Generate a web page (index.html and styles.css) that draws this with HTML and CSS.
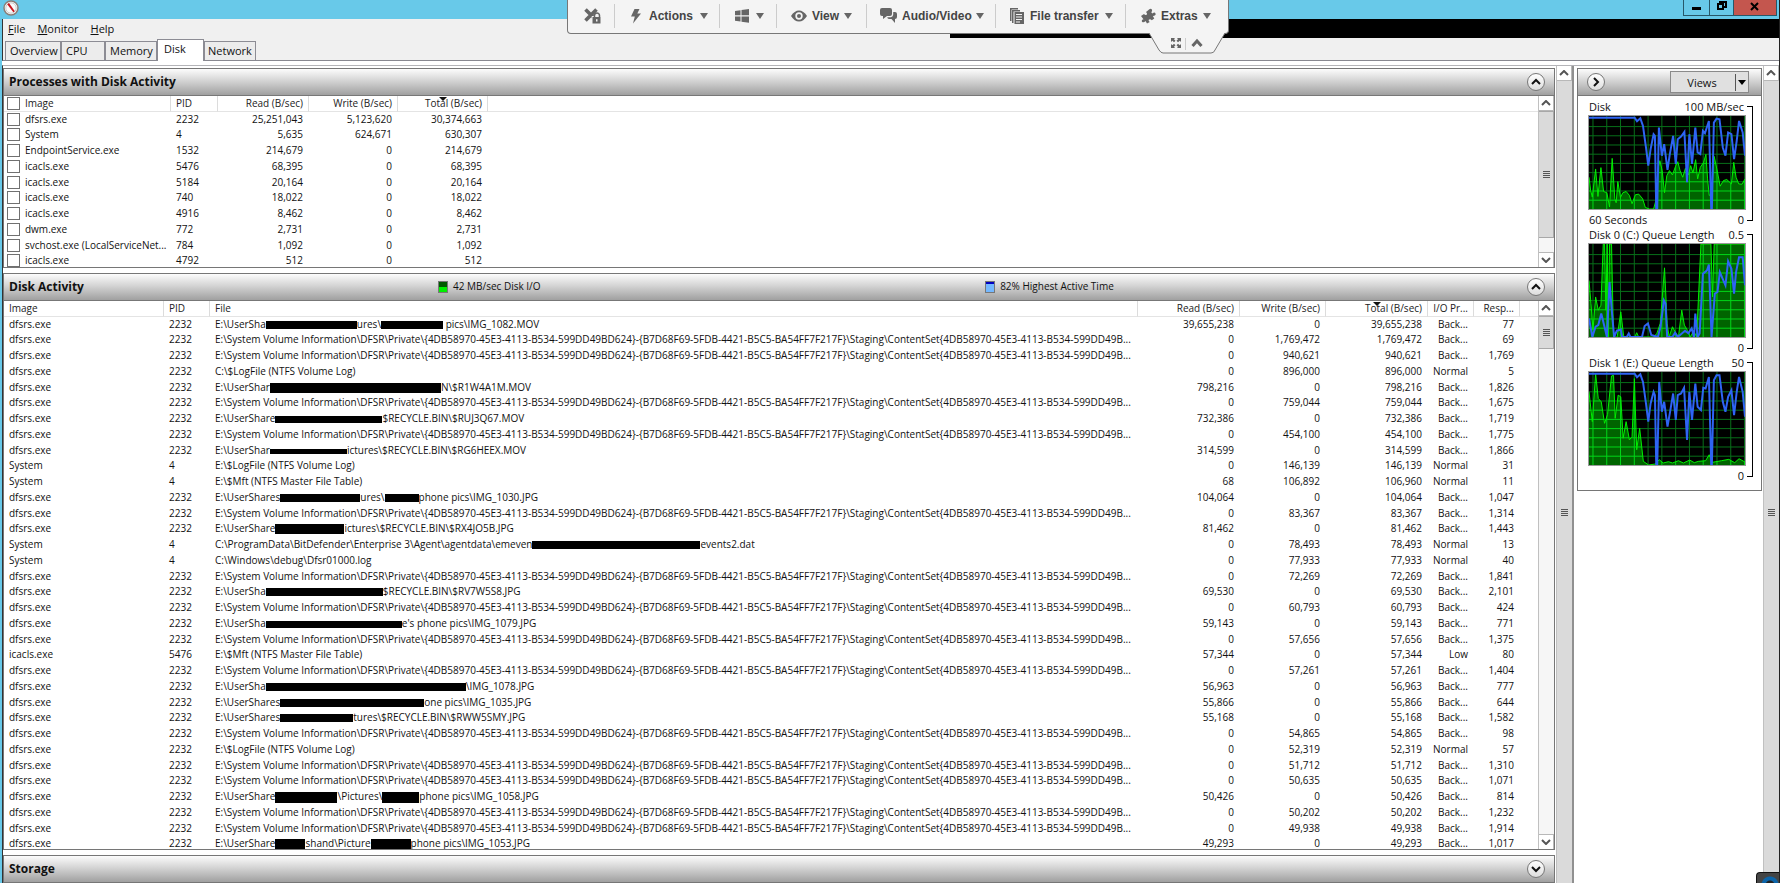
FILE: index.html
```html
<!DOCTYPE html>
<html lang="en">
<head>
    <meta charset="UTF-8">
    <meta name="viewport" content="width=device-width, initial-scale=1.0">
    <title>Resource Monitor</title>
    <link rel="stylesheet" href="styles.css">
</head>
<body>
    <div class="titlebar">
        <svg class="app-icon" viewBox="0 0 16 16" width="16" height="16">
            <circle cx="8" cy="8" r="7" fill="#fafafa" stroke="#8a7f78" stroke-width="1.5"/>
            <circle cx="8" cy="8" r="5.2" fill="none" stroke="#ccc"/>
            <path d="M4.2 4.2L6 3l5.800 8.200-1.400 1z" fill="#c8141c"/>
        </svg>
        <div class="controls">
            <button class="min" aria-label="Minimize"><svg width="10" height="12" viewBox="0 0 10 12"><path d="M0 7h9v3H0z"/></svg></button>
            <button class="restore" aria-label="Restore"><svg width="10" height="12" viewBox="0 0 10 12"><path d="M1 4h5v5H1zM3 4V2h6v5H6" fill="none" stroke="#000" stroke-width="2"/></svg></button>
            <button class="close" aria-label="Close"><svg width="10" height="12" viewBox="0 0 10 12"><path d="M1 3l7 7M8 3l-7 7" fill="none" stroke="#000" stroke-width="2"/></svg></button>
        </div>
    </div>
    <div class="menubar">
        <a href="#"><u>F</u>ile</a>
        <a href="#"><u>M</u>onitor</a>
        <a href="#"><u>H</u>elp</a>
        <div class="blackout"></div>
    </div>
    <div class="tabs">
        <button class="t1">Overview</button>
        <button class="t2">CPU</button>
        <button class="t3">Memory</button>
        <button class="t4 active">Disk</button>
        <button class="t5">Network</button>
    </div>

    <div class="main">
        <div class="left">
            <div class="panel processes">
                <div class="panel-head">
                    <h2>Processes with Disk Activity</h2>
                    <button class="round" aria-label="Collapse"><svg width="12" height="10" viewBox="0 0 12 10"><path d="M2 7l4-4 4 4"/></svg></button>
                </div>
                <div class="panel-body">
                    <div class="table-wrap">
                        <table id="procs">
                            <colgroup><col class="p-image"><col class="p-pid"><col class="p-read"><col class="p-write"><col class="p-total"><col></colgroup>
                            <thead><tr>
                                <th><label><input type="checkbox">Image</label></th><th>PID</th><th class="num">Read (B/sec)</th><th class="num">Write (B/sec)</th><th class="num sorted">Total (B/sec)</th><th></th>
                            </tr></thead>
                            <tbody></tbody>
                        </table>
                    </div>
                    <div class="scroll">
                        <button aria-label="Up"><svg width="10" height="6" viewBox="0 0 10 6"><path d="M1 5l4-4 4 4"/></svg></button>
                        <div class="thumb thumb-procs"><i></i></div>
                        <div class="track"></div>
                        <button aria-label="Down"><svg width="10" height="6" viewBox="0 0 10 6"><path d="M1 1l4 4 4-4"/></svg></button>
                    </div>
                </div>
            </div>

            <div class="panel activity">
                <div class="panel-head">
                    <h2>Disk Activity</h2>
                    <span class="legend legend-io"><b class="swatch green"></b>42 MB/sec Disk I/O</span>
                    <span class="legend legend-time"><b class="swatch blue"></b>82% Highest Active Time</span>
                    <button class="round" aria-label="Collapse"><svg width="12" height="10" viewBox="0 0 12 10"><path d="M2 7l4-4 4 4"/></svg></button>
                </div>
                <div class="panel-body">
                    <div class="table-wrap">
                        <table id="files">
                            <colgroup><col class="f-image"><col class="f-pid"><col><col class="f-read"><col class="f-write"><col class="f-total"><col class="f-prio"><col class="f-resp"><col class="f-rest"></colgroup>
                            <thead><tr>
                                <th>Image</th><th>PID</th><th>File</th><th class="num">Read (B/sec)</th><th class="num">Write (B/sec)</th><th class="num sorted">Total (B/sec)</th><th class="num">I/O Pr...</th><th class="num">Resp...</th><th></th>
                            </tr></thead>
                            <tbody></tbody>
                        </table>
                    </div>
                    <div class="scroll">
                        <button aria-label="Up"><svg width="10" height="6" viewBox="0 0 10 6"><path d="M1 5l4-4 4 4"/></svg></button>
                        <div class="thumb thumb-files"><i></i></div>
                        <div class="track"></div>
                        <button aria-label="Down"><svg width="10" height="6" viewBox="0 0 10 6"><path d="M1 1l4 4 4-4"/></svg></button>
                    </div>
                </div>
            </div>

            <div class="panel storage">
                <div class="panel-head">
                    <h2>Storage</h2>
                    <button class="round" aria-label="Expand"><svg width="12" height="10" viewBox="0 0 12 10"><path d="M2 3l4 4 4-4"/></svg></button>
                </div>
            </div>
        </div>
        <div class="scroll outer">
            <button aria-label="Up"><svg width="10" height="6" viewBox="0 0 10 6"><path d="M1 5l4-4 4 4"/></svg></button>
            <div class="thumb"><i></i></div>
        </div>

        <div class="side">
            <div class="panel charts">
                <div class="panel-head">
                    <button class="round" aria-label="Hide graphs"><svg width="12" height="10" viewBox="0 0 12 10"><path d="M4 1l4 4-4 4"/></svg></button>
                    <button class="views"><span>Views</span><em></em></button>
                </div>
                <div id="charts"></div>
            </div>
        </div>
        <div class="scroll outer">
            <button aria-label="Up"><svg width="10" height="6" viewBox="0 0 10 6"><path d="M1 5l4-4 4 4"/></svg></button>
            <div class="thumb"><i></i></div>
        </div>
    </div>

    <!-- remote session toolbar, floats over the window -->
    <div class="remote">
        <div class="remote-bar">
            <button class="r-lock" aria-label="Close and lock"><svg width="18" height="18" viewBox="0 0 18 18"><path d="M1.500 2.500l11 11M12.500 2.500l-11 11" fill="none" stroke="#666" stroke-width="3.6"/><path d="M8 9.500h9V17H8z" fill="#666" stroke="#f4f4f4" stroke-width="1"/><path d="M10.500 10V8.500a2.500 2.500 0 0 1 5 0V10" fill="none" stroke="#666" stroke-width="1.500"/><path d="M12 12.200h1.500v2.300H12z" fill="#f4f4f4"/></svg></button>
            <button class="r-actions"><svg width="12" height="16" viewBox="0 0 12 16"><path d="M4.500 1h5L7.300 5.500H11L3 15.500l1.800-7H1z"/></svg>Actions<em></em></button>
            <button class="r-win" aria-label="Windows"><svg width="16" height="16" viewBox="0 0 16 16"><path d="M1 3l5.500-.8v5H1zM7.500 2L15 1v6.200H7.500zM1 8.500h5.500v5L1 12.800zM7.500 8.500H15v6.200l-7.500-1z"/></svg><em></em></button>
            <button class="r-view"><svg width="16" height="16" viewBox="0 0 16 16"><path fill-rule="evenodd" d="M0 8q3.500-5.500 8-5.500T16 8q-3.500 5.500-8 5.500T0 8zm8-3.700a3.700 3.700 0 1 0 0 7.400 3.700 3.700 0 0 0 0-7.400z"/><circle cx="8" cy="8" r="2"/></svg>View<em></em></button>
            <button class="r-av"><svg width="18" height="16" viewBox="0 0 18 16"><path d="M2 0h8q2 0 2 2v4q0 2-2 2H7l-4 3V8H2Q0 8 0 6V2q0-2 2-2z"/><path d="M13.200 4H15q2 0 2 2v3q0 2-2 2v4l-3.500-4H9q-1.500 0-1.800-1.800H11q2.200-.3 2.200-2.600z"/></svg>Audio/Video<em></em></button>
            <button class="r-file"><svg width="14" height="16" viewBox="0 0 14 16"><path d="M0 0h8v1.500H1.500V13H0zM2 2h8v1.500H3.500V15H2zM4.500 4H14v12H4.500z"/><path d="M6 6.500h6M6 9h6M6 11.500h6M6 14h4" stroke="#f4f4f4" fill="none"/></svg>File transfer<em></em></button>
            <button class="r-extras"><svg width="16" height="16" viewBox="0 0 16 16"><path d="M9 1.500q2-1.500 3 .3.300 1.500-.8 2.500l1.300 1.200q2-2 3 0 .7 1.800-1.200 2.200l-1.500.3 1.500 2.500-2.500 1.800Q10 10.500 8.800 11.800q-.5 1.200 1 2.200L7 15.500 5.500 13q-1.800 2-3.500.7-.8-2 1.500-2.500L1 8l3-2q1.500 1.800 2.800.5Q7.500 5.500 6 4l2.500-2z"/></svg>Extras<em></em></button>
        </div>
        <div class="remote-tab">
            <svg class="tab-shape" width="76" height="21" viewBox="0 0 76 21"><path d="M0 0L10 17q2 3 4 3h48q3 0 4-3L76 0" fill="#f4f4f4" stroke="#777"/></svg>
            <button aria-label="Full screen"><svg width="10" height="10" viewBox="0 0 10 10"><path d="M0 0h4L3 1.200l1.500 1.500-1.500 1.500L1.400 2.800 0 4zM10 0v4L8.800 2.800 7 4.200 5.500 2.700 7 1.200 6 0zM0 10V6l1.400 1.200L3 5.700l1.500 1.500L3 8.800 4 10zM10 10H6l1-1.200-1.500-1.600L7 5.700l1.800 1.500L10 6z"/></svg></button>
            <button class="up" aria-label="Hide toolbar"><svg width="12" height="10" viewBox="0 0 12 10"><path d="M1.500 8L6 3l4.500 5" fill="none" stroke="#666" stroke-width="3"/></svg></button>
        </div>
    </div>
    <div class="badge"></div>

    <script>
        //processes table: image, pid, read, write, total
        var procs = [
            ["dfsrs.exe", "2232", "25,251,043", "5,123,620", "30,374,663"],
            ["System", "4", "5,635", "624,671", "630,307"],
            ["EndpointService.exe", "1532", "214,679", "0", "214,679"],
            ["icacls.exe", "5476", "68,395", "0", "68,395"],
            ["icacls.exe", "5184", "20,164", "0", "20,164"],
            ["icacls.exe", "740", "18,022", "0", "18,022"],
            ["icacls.exe", "4916", "8,462", "0", "8,462"],
            ["dwm.exe", "772", "2,731", "0", "2,731"],
            ["svchost.exe (LocalServiceNet...", "784", "1,092", "0", "1,092"],
            ["icacls.exe", "4792", "512", "0", "512"]
        ]
        var html = ""
        procs.forEach(function(p){
            html += "<tr><td><label><input type='checkbox'>" + p[0] + "</label></td><td>" + p[1] + "</td>"
            html += "<td class='num'>" + p[2] + "</td><td class='num'>" + p[3] + "</td><td class='num'>" + p[4] + "</td><td></td></tr>"
        })
        document.querySelector("#procs tbody").innerHTML = html

        //files table: file, read, write, total, response time
        //[n] in a path is a blacked out part n pixels wide, [n,h] sets its height too
        var staging = "E:\\System Volume Information\\DFSR\\Private\\{4DB58970-45E3-4113-B534-599DD49BD624}-{B7D68F69-5FDB-4421-B5C5-BA54FF7F217F}\\Staging\\ContentSet{4DB58970-45E3-4113-B534-599DD49B..."
        var files = [
            ["E:\\UserSha[91]ures\\[62] pics\\IMG_1082.MOV", "39,655,238", "0", "39,655,238", "77"],
            [staging, "0", "1,769,472", "1,769,472", "69"],
            [staging, "0", "940,621", "940,621", "1,769"],
            ["C:\\$LogFile (NTFS Volume Log)", "0", "896,000", "896,000", "5"],
            ["E:\\UserShar[171,10]N\\$R1W4A1M.MOV", "798,216", "0", "798,216", "1,826"],
            [staging, "0", "759,044", "759,044", "1,675"],
            ["E:\\UserShare[107,7]$RECYCLE.BIN\\$RUJ3Q67.MOV", "732,386", "0", "732,386", "1,719"],
            [staging, "0", "454,100", "454,100", "1,775"],
            ["E:\\UserShar[77,5]ictures\\$RECYCLE.BIN\\$RG6HEEX.MOV", "314,599", "0", "314,599", "1,866"],
            ["E:\\$LogFile (NTFS Volume Log)", "0", "146,139", "146,139", "31"],
            ["E:\\$Mft (NTFS Master File Table)", "68", "106,892", "106,960", "11"],
            ["E:\\UserShares[80]ures\\[34]phone pics\\IMG_1030.JPG", "104,064", "0", "104,064", "1,047"],
            [staging, "0", "83,367", "83,367", "1,314"],
            ["E:\\UserShare[69,10]ictures\\$RECYCLE.BIN\\$RX4JO5B.JPG", "81,462", "0", "81,462", "1,443"],
            ["C:\\ProgramData\\BitDefender\\Enterprise 3\\Agent\\agentdata\\emeven[168]events2.dat", "0", "78,493", "78,493", "13"],
            ["C:\\Windows\\debug\\Dfsr01000.log", "0", "77,933", "77,933", "40"],
            [staging, "0", "72,269", "72,269", "1,841"],
            ["E:\\UserSha[117]$RECYCLE.BIN\\$RV7W5S8.JPG", "69,530", "0", "69,530", "2,101"],
            [staging, "0", "60,793", "60,793", "424"],
            ["E:\\UserSha[136,7]e's phone pics\\IMG_1079.JPG", "59,143", "0", "59,143", "771"],
            [staging, "0", "57,656", "57,656", "1,375"],
            ["E:\\$Mft (NTFS Master File Table)", "57,344", "0", "57,344", "80"],
            [staging, "0", "57,261", "57,261", "1,404"],
            ["E:\\UserSha[200]\\IMG_1078.JPG", "56,963", "0", "56,963", "777"],
            ["E:\\UserShares[144]one pics\\IMG_1035.JPG", "55,866", "0", "55,866", "644"],
            ["E:\\UserShares[73]tures\\$RECYCLE.BIN\\$RWW5SMY.JPG", "55,168", "0", "55,168", "1,582"],
            [staging, "0", "54,865", "54,865", "98"],
            ["E:\\$LogFile (NTFS Volume Log)", "0", "52,319", "52,319", "57"],
            [staging, "0", "51,712", "51,712", "1,310"],
            [staging, "0", "50,635", "50,635", "1,071"],
            ["E:\\UserShare[62,11]\\Pictures\\[37,11]phone pics\\IMG_1058.JPG", "50,426", "0", "50,426", "814"],
            [staging, "0", "50,202", "50,202", "1,232"],
            [staging, "0", "49,938", "49,938", "1,914"],
            ["E:\\UserShare[30,11]shand\\Picture[40,11]phone pics\\IMG_1053.JPG", "49,293", "0", "49,293", "1,017"]
        ]
        html = ""
        files.forEach(function(f, i){
            var image = "dfsrs.exe", pid = "2232", prio = "Back..."
            if (/LogFile|Mft|Program|Windows/.test(f[0])) {
                prio = "Normal"
                if (i == 9 || i == 10 || i == 14 || i == 15) {
                    image = "System"
                    pid = "4"
                }
            }
            if (i == 21) {
                image = "icacls.exe"
                pid = "5476"
                prio = "Low"
            }
            var path = f[0].replace(/\[(\d+)(?:,(\d+))?\]/g, function(m, w, h){
                return "<span class='bar' style='width:" + w + "px;height:" + (h || 8) + "px'></span>"
            })
            html += "<tr><td>" + image + "</td><td>" + pid + "</td><td>" + path + "</td>"
            html += "<td class='num'>" + f[1] + "</td><td class='num'>" + f[2] + "</td><td class='num'>" + f[3] + "</td>"
            html += "<td class='num'>" + prio + "</td><td class='num'>" + f[4] + "</td><td></td></tr>"
        })
        document.querySelector("#files tbody").innerHTML = html

        //graphs, points are in a 471 x 281 box
        var charts = [
            {
                name: "Disk", max: "100 MB/sec", foot: "60 Seconds",
                green: "0,185 5,225 10,245 20,160 27,243 36,156 44,228 54,232 62,275 70,128 78,250 82,262 87,198 95,246 102,232 112,228 122,240 130,265 140,238 150,236 162,250 170,276 182,281 195,281 202,255 208,160 214,135 221,165 228,232 235,180 243,165 252,178 262,150 268,138 275,165 283,185 291,158 300,178 307,150 314,172 322,132 328,190 336,155 346,140 353,116 358,190 363,240 370,235 378,122 386,160 396,212 406,195 416,192 430,205 437,140 444,185 452,205 462,206 471,190",
                blue: "0,5 138,5 145,16 155,7 163,30 172,95 179,150 186,100 195,55 199,60 203,281 206,281 211,35 220,120 227,85 237,163 244,115 254,60 262,145 268,70 278,62 288,48 296,200 303,55 311,145 321,35 328,110 336,115 344,45 350,52 362,15 369,281 371,281 377,20 385,8 394,10 404,95 412,120 420,50 430,55 438,130 446,75 453,15 464,50 471,120"
            },
            {
                name: "Disk 0 (C:) Queue Length", max: "0.5", foot: "",
                green: "0,110 6,180 12,260 20,160 28,200 36,185 43,0 47,0 51,200 55,0 58,281 62,0 68,0 74,281 85,281 96,205 105,281 138,281 144,268 150,281 195,281 205,270 215,240 228,72 236,240 242,281 252,250 260,265 270,281 280,200 288,245 298,262 306,281 316,262 325,281 338,0 368,0 373,160 378,0 471,0",
                blue: "0,225 10,281 20,250 28,245 37,210 48,255 54,281 62,115 70,215 76,281 84,262 92,260 96,258 100,281 114,281 120,270 125,281 160,281 168,248 178,240 188,275 208,281 216,250 226,170 231,180 236,281 252,281 260,268 268,281 290,262 300,270 310,255 317,281 321,210 328,281 334,270 344,90 350,85 356,80 362,62 370,281 380,150 388,145 395,85 412,125 420,52 430,75 438,150 444,85 453,40 464,40 471,125"
            },
            {
                name: "Disk 1 (E:) Queue Length", max: "50", foot: "",
                green: "0,60 10,150 20,5 28,80 37,90 47,155 56,128 63,60 68,12 74,10 79,140 88,70 96,75 103,200 112,150 122,205 130,195 137,20 144,235 153,170 164,270 180,281 200,278 212,265 224,275 240,271 252,275 270,268 285,275 304,266 318,274 330,270 352,268 363,250 372,273 400,268 422,264 440,274 453,262 471,272",
                blue: "0,5 138,5 145,16 155,7 163,30 172,95 179,150 186,95 195,60 199,70 203,281 206,281 212,30 220,120 227,90 237,165 244,125 254,65 262,145 268,70 278,65 287,48 296,205 303,60 311,145 321,35 328,105 338,115 345,48 352,50 362,15 369,281 371,281 377,25 385,10 394,10 404,90 412,120 420,75 430,55 438,130 446,60 453,15 464,60 471,135"
            }
        ]
        var grid = ""
        for (var x = 12; x < 471; x += 41.6) {
            grid += "M" + x + " 0V281"
        }
        for (var y = 32; y < 281; y += 27.8) {
            grid += "M0 " + y + "H471"
        }
        html = ""
        charts.forEach(function(c, i){
            var area = "0,281 " + c.green + " 471,281"
            html += "<div class='chart'><div class='chart-row'><span>" + c.name + "</span><span>" + c.max + "</span></div>"
            html += "<svg viewBox='0 0 471 281' preserveAspectRatio='none'>"
            html += "<path class='grid' d='" + grid + "'/>"
            html += "<clipPath id='area" + i + "'><polygon points='" + area + "'/></clipPath>"
            html += "<polygon class='area' points='" + area + "'/>"
            html += "<path class='grid lit' clip-path='url(#area" + i + ")' d='" + grid + "'/>"
            html += "<polyline class='green-line' points='" + c.green + "'/>"
            html += "<polyline class='blue-line' points='" + c.blue + "'/></svg>"
            html += "<div class='chart-row'><span>" + c.foot + "</span><span>0</span></div></div>"
        })
        document.getElementById("charts").innerHTML = html
    </script>
</body>
</html>
```
FILE: styles.css
```css
*{
    margin: 0;
    padding: 0;
    box-sizing: border-box;
}
body{
    height: 100vh;
    display: flex;
    flex-direction: column;
    overflow: hidden;
    position: relative;
    background: #fff;
    border-left: 2px solid #68c8e8;
    border-right: 1px solid #222;
    font: 11px/15px "Open Sans", "Noto Sans", sans-serif;
    color: #111;
}
button{
    font: inherit;
    color: inherit;
    border: 0;
    background: none;
}
svg{
    display: block;
}

/* window frame */
.titlebar{
    flex: none;
    display: flex;
    justify-content: space-between;
    height: 19px;
    background: #68c9e9;
}
.app-icon{
    margin-left: 1px;
}
.controls{
    display: flex;
    height: 16px;
    margin-right: 2px;
}
.controls button{
    display: flex;
    justify-content: center;
    border: 1px solid #27586a;
    border-top: 0;
    border-left: 0;
}
.controls .min{
    width: 27px;
    border-left: 1px solid #27586a;
}
.controls .restore{
    width: 24px;
}
.controls .close{
    width: 43px;
    background: #c4564e;
}
.menubar{
    flex: none;
    position: relative;
    display: flex;
    gap: 12px;
    height: 19px;
    padding: 2px 5px;
    background: #f0f0f0;
    border-left: 1px solid #333;
}
.menubar a{
    color: #111;
    text-decoration: none;
}
.blackout{
    position: absolute;
    top: 0;
    right: 0;
    left: 947px;
    height: 19px;
    background: #000;
}
.tabs{
    flex: none;
    display: flex;
    align-items: flex-end;
    height: 23px;
    padding-left: 2px;
    background: #f0f0f0;
    border-left: 1px solid #333;
    border-bottom: 1px solid #888890;
}
.tabs button{
    height: 19px;
    padding: 0 4px 1px;
    text-align: left;
    background: #ececec;
    border: 1px solid #8c8c94;
    border-bottom: 0;
    white-space: nowrap;
}
.tabs .t1{ width: 56px; }
.tabs .t2{ width: 44px; }
.tabs .t3{ width: 52px; }
.tabs .t4{ width: 47px; }
.tabs .t5{ width: 52px; padding: 0 3px 1px; }
.tabs .active{
    height: 22px;
    margin-bottom: -1px;
    padding: 0 6px 4px;
    background: #fff;
}

/* content */
.main{
    flex: 1;
    min-height: 0;
    display: flex;
    margin-top: 4px;
    border-top: 1px solid #b4b4b8;
    border-left: 1px solid #333;
}
.left{
    flex: 1;
    min-width: 0;
    display: flex;
    flex-direction: column;
    gap: 5px;
    padding: 2px 1px 0 0;
}
.panel{
    display: flex;
    flex-direction: column;
    background: #fff;
    border: 1px solid #767676;
}
.processes{
    flex: none;
    height: 200px;
}
.activity{
    flex: 1;
    min-height: 0;
}
.storage{
    flex: none;
    height: 28px;
}
.panel-head{
    flex: none;
    display: flex;
    align-items: center;
    position: relative;
    height: 27px;
    padding: 0 9px 0 5px;
    background: linear-gradient(#fcfcfc, #d4d4d4 45%, #a0a0a0);
    border-bottom: 1px solid #777;
}
.storage .panel-head{
    height: 26px;
    border-bottom: 0;
}
h2{
    flex: 1;
    font-size: 12px;
    line-height: 16px;
    font-weight: 700;
}
.round{
    display: flex;
    align-items: center;
    justify-content: center;
    width: 18px;
    height: 18px;
    border: 1px solid #777;
    border-radius: 50%;
    background: linear-gradient(#fff, #ddd);
}
.round path{
    fill: none;
    stroke: #111;
    stroke-width: 2;
}
.legend{
    position: absolute;
    top: 5px;
    display: flex;
    align-items: center;
    gap: 5px;
    font-size: 10px;
}
.legend-io{ left: 28%; }
.legend-time{ left: 63.3%; }
.swatch{
    width: 10px;
    height: 12px;
    border: 1px solid #777;
}
.green{ background: linear-gradient(#005a00 50%, #00f000 50%); }
.blue{ background: linear-gradient(#0000c0 20%, #74b8ff 20%); }
.panel-body{
    flex: 1;
    min-height: 0;
    display: flex;
}
.table-wrap{
    flex: 1;
    min-width: 0;
    overflow: hidden;
}
table{
    width: 100%;
    table-layout: fixed;
    border-collapse: separate;
    border-spacing: 0;
    font-size: 10px;
}
tr{
    height: 16px;
}
/* keeps the row pitch a little under 16px */
tbody tr:nth-child(4n+1){
    height: 15px;
}
th, td{
    font-weight: 400;
    text-align: left;
    vertical-align: top;
    line-height: 15px;
    white-space: nowrap;
    overflow: hidden;
    padding: 0 5px;
}
th{
    position: relative;
    color: #222;
    border-right: 1px solid #dcdcdc;
    border-bottom: 1px solid #e4e4e4;
}
th:last-child{
    border-right: 0;
}
.num{
    text-align: right;
    padding-right: 6px;
}
th.num{
    padding-right: 5px;
}
td.num, th:nth-child(7){
    padding-left: 0;
}
.sorted::before{
    content: "";
    position: absolute;
    top: 1px;
    left: 50%;
    margin-left: -4px;
    border: 4px solid transparent;
    border-top-color: #111;
    border-bottom: 0;
}
.p-image{ width: 167px; }
.p-pid{ width: 47px; }
.p-read{ width: 91px; }
.p-write{ width: 89px; }
.p-total{ width: 90px; }
.f-image{ width: 160px; }
.f-pid{ width: 46px; }
.f-read{ width: 102px; }
.f-write{ width: 86px; }
.f-total{ width: 102px; }
.f-prio{ width: 46px; }
.f-resp{ width: 46px; }
.f-rest{ width: 18px; }
#procs th:first-child, #procs td:first-child{
    padding-left: 3px;
    padding-right: 0;
}
label{
    display: flex;
    align-items: center;
    gap: 5px;
}
input{
    appearance: none;
    flex: none;
    width: 13px;
    height: 13px;
    background: #fff;
    border: 1px solid #707070;
}
.bar{
    display: inline-block;
    vertical-align: middle;
    background: #000;
}

/* scrollbars */
.scroll{
    flex: none;
    display: flex;
    flex-direction: column;
    width: 16px;
    background: #f6f6f6;
    border-left: 1px solid #c0c0c0;
}
.scroll button{
    flex: none;
    display: flex;
    align-items: center;
    justify-content: center;
    height: 15px;
    background: #fff;
    border: 1px solid #b8b8b8;
    border-width: 0 1px 1px 0;
}
.scroll .track + button{
    border-width: 1px 1px 0 0;
}
.scroll path{
    fill: none;
    stroke: #555;
    stroke-width: 2;
}
.thumb{
    flex: 1;
    display: flex;
    align-items: center;
    justify-content: center;
    background: #dadada;
    border: 1px solid #a8a8a8;
    border-left: 0;
}
.thumb i{
    width: 7px;
    height: 8px;
    background: repeating-linear-gradient(#555 0 1px, transparent 1px 2px);
}
.thumb-procs{
    flex: none;
    height: 127px;
}
.thumb-files{
    flex: none;
    height: 33px;
}
.track{
    flex: 1;
}
.outer .thumb{
    border: 0;
    align-items: center;
    padding-top: 62px;
}

/* graphs */
.side{
    flex: none;
    width: 191px;
    padding: 2px 1px 0 3px;
    border-left: 2px solid #909090;
}
.charts .panel-head{
    justify-content: space-between;
    padding-right: 12px;
    padding-left: 9px;
}
.views{
    display: flex;
    align-items: center;
    width: 79px;
    height: 22px;
    background: #e0e0e0;
    border: 1px solid #8a8a8a;
}
.views span{
    flex: 1;
    padding-right: 2px;
    text-align: center;
    border-right: 1px solid #555;
    line-height: 17px;
}
.views em{
    margin: 0 2px;
    border: 4px solid transparent;
    border-top: 5px solid #000;
    border-bottom: 0;
}
#charts{
    display: flex;
    flex-direction: column;
    padding: 3px 8px 7px 10px;
}
.chart{
    position: relative;
    padding-right: 7px;
}
.chart::after{
    content: "";
    position: absolute;
    top: 7px;
    right: 0;
    bottom: 6px;
    width: 5px;
    border: 1px solid #000;
    border-left: 0;
}
.chart svg{
    width: 100%;
    height: 95px;
    margin: 1px 0 2px;
    background: #000;
    border: 1px solid #999;
}
.chart-row{
    display: flex;
    justify-content: space-between;
    min-height: 15px;
    padding: 0 2px 0 1px;
}
.grid{
    fill: none;
    stroke: #08701a;
    stroke-width: 3;
}
.lit{
    stroke: #00d818;
}
.area{
    fill: #006400;
}
.green-line{
    fill: none;
    stroke: #00f000;
    stroke-width: 3;
}
.blue-line{
    fill: none;
    stroke: #2e64f4;
    stroke-width: 6;
}

/* remote toolbar */
.remote{
    position: absolute;
    top: 0;
    left: 565px;
    width: 662px;
    font: 700 12px/16px "Liberation Sans", Arial, sans-serif;
    color: #444;
}
.remote svg{
    fill: #666;
}
.remote-bar{
    display: flex;
    align-items: center;
    height: 34px;
    padding-bottom: 2px;
    background: #f4f4f4;
    border: 1px solid #777;
    border-top: 0;
    border-radius: 0 0 4px 4px;
}
.remote-bar button{
    display: flex;
    align-items: center;
    height: 24px;
    border-right: 1px solid #ccc;
    white-space: nowrap;
}
.remote-bar button:last-child{
    border-right: 0;
}
.remote-bar em{
    margin-left: 6px;
    border: 4px solid transparent;
    border-top: 6px solid #666;
    border-bottom: 0;
}
.r-lock{ width: 47px; padding-left: 16px; }
.r-actions{ width: 105px; padding-left: 15px; gap: 7px; }
.r-win{ width: 57px; padding-left: 14px; }
.r-view{ width: 90px; padding-left: 14px; gap: 5px; }
.r-av{ width: 129px; padding-left: 13px; gap: 4px; }
.r-file{ width: 130px; padding-left: 14px; gap: 6px; }
.r-extras{ padding-left: 14px; gap: 5px; }
.r-actions em, .r-view em, .r-av em, .r-file em, .r-extras em{
    margin-left: 0;
}
.remote-tab{
    position: absolute;
    top: 33px;
    right: 4px;
    display: flex;
    align-items: center;
    width: 76px;
    height: 21px;
    padding-left: 22px;
}
.tab-shape{
    position: absolute;
    top: 0;
    left: 0;
}
.remote-tab button{
    position: relative;
    padding-bottom: 2px;
}
.remote-tab .up{
    margin-left: 4px;
    padding-left: 5px;
    border-left: 1px solid #ccc;
}
.badge{
    position: absolute;
    right: 0;
    bottom: 0;
    width: 23px;
    height: 11px;
    background: radial-gradient(circle at 13px 12px, #222 4px, #0c64a8 5px 8px, #444 9px);
    border: 1px solid #111;
    border-width: 1px 0 0 1px;
    border-radius: 4px 0 0 0;
}
```
